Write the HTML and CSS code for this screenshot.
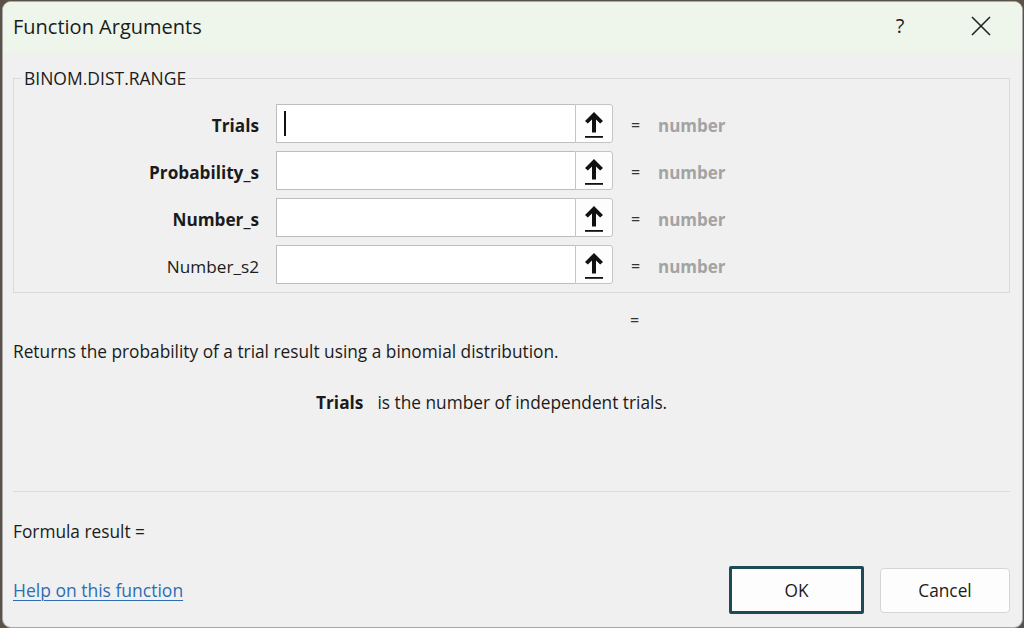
FILE: index.html
```html
<!DOCTYPE html>
<html>
<head>
<meta charset="utf-8">
<link rel="stylesheet" href="styles.css">
</head>
<body>
<div class="dialog">
  <div class="titlebar">
    <span class="title">Function Arguments</span>
    <span class="help">?</span>
    <span class="close">
      <svg width="20" height="20" viewBox="0 0 20 20"><path d="M1 1 L19 19 M19 1 L1 19" stroke="#222" stroke-width="1.6" fill="none"/></svg>
    </span>
  </div>
  <div class="content">
    <fieldset class="group">
      <legend>BINOM.DIST.RANGE</legend>
      <div class="arg">
        <span class="label bold">Trials</span>
        <div class="field"><span class="input"><span class="caret"></span></span><span class="ref"><svg width="18" height="26" viewBox="0 0 18 26"><path d="M9 0 L18 9 L15.2 11.6 L11 7.4 V20.5 H7 V7.4 L2.8 11.6 L0 9 Z" fill="#111"/><rect x="0" y="24" width="18" height="1.8" fill="#111"/></svg></span></div>
        <span class="eq">=</span><span class="type">number</span>
      </div>
      <div class="arg">
        <span class="label bold">Probability_s</span>
        <div class="field"><span class="input"></span><span class="ref"><svg width="18" height="26" viewBox="0 0 18 26"><path d="M9 0 L18 9 L15.2 11.6 L11 7.4 V20.5 H7 V7.4 L2.8 11.6 L0 9 Z" fill="#111"/><rect x="0" y="24" width="18" height="1.8" fill="#111"/></svg></span></div>
        <span class="eq">=</span><span class="type">number</span>
      </div>
      <div class="arg">
        <span class="label bold">Number_s</span>
        <div class="field"><span class="input"></span><span class="ref"><svg width="18" height="26" viewBox="0 0 18 26"><path d="M9 0 L18 9 L15.2 11.6 L11 7.4 V20.5 H7 V7.4 L2.8 11.6 L0 9 Z" fill="#111"/><rect x="0" y="24" width="18" height="1.8" fill="#111"/></svg></span></div>
        <span class="eq">=</span><span class="type">number</span>
      </div>
      <div class="arg">
        <span class="label">Number_s2</span>
        <div class="field"><span class="input"></span><span class="ref"><svg width="18" height="26" viewBox="0 0 18 26"><path d="M9 0 L18 9 L15.2 11.6 L11 7.4 V20.5 H7 V7.4 L2.8 11.6 L0 9 Z" fill="#111"/><rect x="0" y="24" width="18" height="1.8" fill="#111"/></svg></span></div>
        <span class="eq">=</span><span class="type">number</span>
      </div>
    </fieldset>
    <div class="result-eq">=</div>
    <div class="desc">Returns the probability of a trial result using a binomial distribution.</div>
    <div class="argdesc"><span class="bold">Trials</span><span class="argtext">is the number of independent trials.</span></div>
    <div class="spacer"></div>
    <div class="sep"></div>
    <div class="formula">Formula result =</div>
    <div class="footer">
      <a class="link" href="#">Help on this function</a>
      <div class="buttons">
        <span class="btn ok">OK</span>
        <span class="btn cancel">Cancel</span>
      </div>
    </div>
  </div>
</div>
</body>
</html>
```
FILE: styles.css
```css
html, body {
  margin: 0;
  padding: 0;
  height: 100%;
}
body {
  background: #5a5148;
  font-family: "Open Sans", "Noto Sans", "Liberation Sans", sans-serif;
  color: #1b1b1b;
  overflow: hidden;
}
.dialog {
  box-sizing: border-box;
  margin: 1px 1px 0 2px;
  height: 627px;
  background: #f0f0f0;
  border: 1px solid #a8a8a8;
  border-radius: 9px;
  display: flex;
  flex-direction: column;
  overflow: hidden;
}
.titlebar {
  height: 51px;
  flex: none;
  background: #eef6ec;
  display: flex;
  align-items: center;
  padding-left: 10px;
}
.title {
  font-size: 20px;
  flex: 1;
  margin-top: -2px;
}
.help {
  font-size: 20px;
  width: 20px;
  text-align: center;
  margin-right: 61px;
  margin-top: -4px;
}
.close {
  display: flex;
  margin-right: 31px;
  margin-top: -3px;
}
.content {
  flex: 1;
  display: flex;
  flex-direction: column;
  padding: 0 12px 0 10px;
}
.group {
  margin: 14px 0 0 0;
  padding: 15px 0 8px 0;
  border: 1px solid #dadada;
  min-width: 0;
}
legend {
  font-size: 17.5px;
  line-height: 22px;
  padding: 0 2px;
  margin-left: 8px;
  color: #1b1b1b;
}
.arg {
  display: flex;
  align-items: center;
  height: 39px;
  margin-bottom: 8px;
}
.arg:last-child {
  margin-bottom: 0;
}
.label {
  width: 245px;
  text-align: right;
  font-size: 17.2px;
  padding-right: 17px;
  box-sizing: content-box;
  flex: none;
  margin-top: 3px;
}
.bold {
  font-weight: 700;
}
.field {
  display: flex;
  height: 39px;
  width: 337px;
  flex: none;
}
.input {
  flex: 1;
  box-sizing: border-box;
  background: #fff;
  border: 1px solid #bdbdbd;
  border-right: none;
  display: flex;
  align-items: center;
  padding-left: 7px;
}
.caret {
  width: 1.5px;
  height: 25px;
  background: #111;
}
.ref {
  width: 38px;
  box-sizing: border-box;
  background: #fdfdfd;
  border: 1px solid #c4c4c4;
  border-radius: 0 3px 3px 0;
  display: flex;
  align-items: center;
  justify-content: center;
  padding-top: 2px;
}
.eq {
  width: 10px;
  margin-left: 18px;
  font-size: 16px;
  color: #333;
  margin-top: 3px;
}
.type {
  margin-left: 17px;
  font-size: 17px;
  font-weight: 700;
  color: #a3a3a3;
  margin-top: 3px;
}
.result-eq {
  margin: 16px 0 0 617px;
  height: 22px;
  line-height: 22px;
  font-size: 16px;
  color: #333;
}
.desc {
  margin-top: 10px;
  height: 22px;
  line-height: 22px;
  font-size: 17.3px;
}
.argdesc {
  margin: 29px 0 0 303px;
  height: 22px;
  line-height: 22px;
  font-size: 17.3px;
  display: flex;
}
.argtext {
  margin-left: 14px;
}
.spacer {
  height: 77px;
  flex: none;
}
.sep {
  height: 1px;
  background: #dcdcdc;
  flex: none;
}
.formula {
  margin-top: 29px;
  height: 22px;
  line-height: 22px;
  font-size: 17.3px;
}
.footer {
  margin-top: 23px;
  display: flex;
  align-items: center;
  justify-content: space-between;
}
.link {
  font-size: 17.5px;
  color: #2e6db4;
  text-decoration: underline;
  text-underline-offset: 3px;
  text-decoration-thickness: 1px;
}
.buttons {
  display: flex;
  align-items: center;
  gap: 16px;
}
.btn {
  display: flex;
  align-items: center;
  justify-content: center;
  box-sizing: border-box;
  font-size: 17.3px;
  color: #1b1b1b;
}
.ok {
  width: 135px;
  height: 48px;
  border: 3px solid #1d4b55;
  border-radius: 2px;
  background: #fdfdfd;
}
.cancel {
  width: 130px;
  height: 45px;
  border: 1px solid #d6d6d6;
  border-radius: 4px;
  background: #fdfdfd;
}
```
